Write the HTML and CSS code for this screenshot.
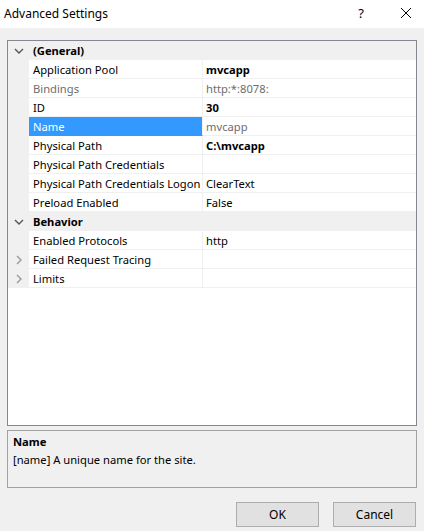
FILE: index.html
```html
<!DOCTYPE html>
<html>
<head>
<meta charset="utf-8">
<link rel="stylesheet" href="styles.css">
</head>
<body>
<div class="window">
  <div class="titlebar">
    <div class="title">Advanced Settings</div>
    <div class="tb-help">?</div>
    <div class="tb-close">
      <svg width="12" height="12" viewBox="0 0 12 12"><path d="M1 1 L11 11 M11 1 L1 11" stroke="#000" stroke-width="1" fill="none"/></svg>
    </div>
  </div>
  <div class="body">
    <div class="grid">
      <div class="row cat">
        <div class="gut"><svg class="chev" width="10" height="8" viewBox="0 0 10 8"><path d="M1 2 L5 6 L9 2" stroke="#555" stroke-width="1.4" fill="none"/></svg></div>
        <div class="name">(General)</div>
        <div class="val"></div>
      </div>
      <div class="row">
        <div class="gut"></div>
        <div class="name">Application Pool</div>
        <div class="val bold">mvcapp</div>
      </div>
      <div class="row ro">
        <div class="gut"></div>
        <div class="name">Bindings</div>
        <div class="val">http:*:8078:</div>
      </div>
      <div class="row">
        <div class="gut"></div>
        <div class="name">ID</div>
        <div class="val bold">30</div>
      </div>
      <div class="row sel">
        <div class="gut"></div>
        <div class="name">Name</div>
        <div class="val grey">mvcapp</div>
      </div>
      <div class="row">
        <div class="gut"></div>
        <div class="name">Physical Path</div>
        <div class="val bold">C:\mvcapp</div>
      </div>
      <div class="row">
        <div class="gut"></div>
        <div class="name">Physical Path Credentials</div>
        <div class="val"></div>
      </div>
      <div class="row">
        <div class="gut"></div>
        <div class="name">Physical Path Credentials Logon</div>
        <div class="val">ClearText</div>
      </div>
      <div class="row">
        <div class="gut"></div>
        <div class="name">Preload Enabled</div>
        <div class="val">False</div>
      </div>
      <div class="row cat">
        <div class="gut"><svg class="chev" width="10" height="8" viewBox="0 0 10 8"><path d="M1 2 L5 6 L9 2" stroke="#555" stroke-width="1.4" fill="none"/></svg></div>
        <div class="name">Behavior</div>
        <div class="val"></div>
      </div>
      <div class="row">
        <div class="gut"></div>
        <div class="name">Enabled Protocols</div>
        <div class="val">http</div>
      </div>
      <div class="row">
        <div class="gut"><svg class="chev" width="8" height="10" viewBox="0 0 8 10"><path d="M2 1 L6 5 L2 9" stroke="#999" stroke-width="1.4" fill="none"/></svg></div>
        <div class="name">Failed Request Tracing</div>
        <div class="val"></div>
      </div>
      <div class="row">
        <div class="gut"><svg class="chev" width="8" height="10" viewBox="0 0 8 10"><path d="M2 1 L6 5 L2 9" stroke="#999" stroke-width="1.4" fill="none"/></svg></div>
        <div class="name">Limits</div>
        <div class="val"></div>
      </div>
    </div>
    <div class="desc">
      <div class="desc-title">Name</div>
      <div class="desc-text">[name] A unique name for the site.</div>
    </div>
    <div class="buttons">
      <button class="btn">OK</button>
      <button class="btn">Cancel</button>
    </div>
  </div>
</div>
</body>
</html>
```

FILE: styles.css
```css
html, body {
  margin: 0;
  padding: 0;
}
* {
  box-sizing: border-box;
}
body {
  width: 424px;
  height: 531px;
  background: #f0f0f0;
  font-family: "Noto Sans", "Open Sans", sans-serif;
  font-size: 11.2px;
  color: #000;
  overflow: hidden;
}
.window {
  display: flex;
  flex-direction: column;
  height: 531px;
}
.titlebar {
  height: 28px;
  background: #fff;
  display: flex;
  align-items: center;
}
.title {
  flex: 1;
  padding-left: 4px;
  font-size: 12px;
  padding-bottom: 2px;
}
.tb-help {
  width: 14px;
  text-align: center;
  font-size: 13px;
  margin-right: 32px;
  padding-bottom: 3px;
}
.tb-close {
  width: 12px;
  height: 12px;
  margin-right: 12px;
  margin-bottom: 3px;
  display: flex;
}
.body {
  flex: 1;
  padding: 12px 7px 0 7px;
  display: flex;
  flex-direction: column;
}
.grid {
  height: 386px;
  flex: none;
  border: 1px solid #828790;
  background: #fff;
  display: flex;
  flex-direction: column;
}
.row {
  display: grid;
  grid-template-columns: 21px 174px 1fr;
  height: 19px;
  line-height: 18px;
  flex: none;
}
.gut {
  background: #f0f0f0;
  display: flex;
  align-items: center;
  justify-content: center;
}
.name {
  padding: 1px 0 0 4px;
  border-bottom: 1px solid #f0f0f0;
  border-right: 1px solid #f0f0f0;
  white-space: nowrap;
  overflow: hidden;
}
.val {
  padding: 1px 0 0 3px;
  border-bottom: 1px solid #f0f0f0;
  white-space: nowrap;
  overflow: hidden;
}
.cat .name, .cat .val {
  background: #f0f0f0;
  border-right: none;
  border-bottom-color: #f0f0f0;
  font-weight: bold;
}
.cat .gut {
  background: #f0f0f0;
}
.bold {
  font-weight: bold;
}
.ro .name, .ro .val, .grey {
  color: #6d6d6d;
}
.sel .name {
  background: #3399ff;
  color: #fff;
  border-bottom-color: #3399ff;
}
.desc {
  margin-top: 4px;
  height: 58px;
  flex: none;
  border: 1px solid #a0a0a0;
  padding: 2px 5px;
}
.desc-title {
  font-weight: bold;
  line-height: 18px;
}
.desc-text {
  line-height: 18px;
}
.buttons {
  margin-top: 14px;
  display: flex;
  justify-content: flex-end;
  gap: 14px;
  padding-right: 1px;
}
.btn {
  width: 83px;
  height: 25px;
  background: #e1e1e1;
  border: 1px solid #adadad;
  font-family: "Noto Sans", "Open Sans", sans-serif;
  font-size: 12px;
  color: #000;
  padding: 0;
}
```
